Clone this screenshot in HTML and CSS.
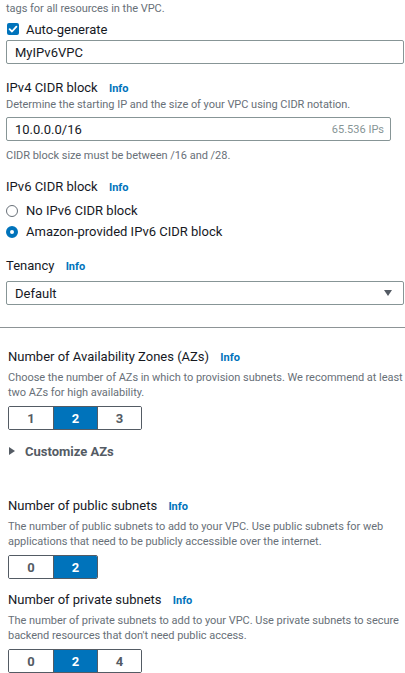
FILE: index.html
```html
<!DOCTYPE html>
<html lang="en">
<head>
    <meta charset="UTF-8">
    <meta name="viewport" content="width=device-width, initial-scale=1.0">
    <title>Create VPC</title>
    <link rel="stylesheet" href="styles.css">
</head>

<body>
    <main>
        <section class="vpc-settings">
            <p class="hint name-hint">Enter a value for the Name tag. This value will be used to auto-generate Name tags for all resources in the VPC.</p>
            <label class="check-row">
                <span class="checkbox checked">
                    <svg viewBox="0 0 12 12" width="12" height="12"><path d="M2.6 6.2 L5 8.5 L9.4 3.6" fill="none" stroke="#fff" stroke-width="1.8" stroke-linecap="round" stroke-linejoin="round"/></svg>
                </span>
                Auto-generate
            </label>
            <div class="text-input wide">MyIPv6VPC</div>

            <div class="field-label">IPv4 CIDR block <a href="#" class="info">Info</a></div>
            <p class="hint">Determine the starting IP and the size of your VPC using CIDR notation.</p>
            <div class="text-input cidr">
                <span>10.0.0.0/16</span>
                <span class="ip-count">65.536 IPs</span>
            </div>
            <p class="hint constraint">CIDR block size must be between /16 and /28.</p>

            <div class="field-label">IPv6 CIDR block <a href="#" class="info">Info</a></div>
            <div class="radio-list">
                <label class="radio-row"><span class="radio"></span>No IPv6 CIDR block</label>
                <label class="radio-row"><span class="radio selected"></span>Amazon-provided IPv6 CIDR block</label>
            </div>

            <div class="field-label">Tenancy <a href="#" class="info">Info</a></div>
            <div class="text-input select wide">
                <span>Default</span>
                <svg class="caret-down" viewBox="0 0 10 8" width="10" height="8"><path d="M1 1 H9 L5 7 Z" fill="#545b64"/></svg>
            </div>
        </section>

        <hr class="divider">

        <section class="subnet-settings">
            <div class="field-label az-label">Number of Availability Zones (AZs) <a href="#" class="info">Info</a></div>
            <p class="hint">Choose the number of AZs in which to provision subnets. We recommend at least two AZs for high availability.</p>
            <div class="segmented">
                <button>1</button>
                <button class="active">2</button>
                <button>3</button>
            </div>
            <div class="expander">
                <svg viewBox="0 0 8 10" width="8" height="10"><path d="M1 1 L7 5 L1 9 Z" fill="#545b64"/></svg>
                Customize AZs
            </div>

            <div class="field-label public-label">Number of public subnets <a href="#" class="info">Info</a></div>
            <p class="hint">The number of public subnets to add to your VPC. Use public subnets for web applications that need to be publicly accessible over the internet.</p>
            <div class="segmented">
                <button>0</button>
                <button class="active">2</button>
            </div>

            <div class="field-label private-label">Number of private subnets <a href="#" class="info">Info</a></div>
            <p class="hint">The number of private subnets to add to your VPC. Use private subnets to secure backend resources that don't need public access.</p>
            <div class="segmented">
                <button>0</button>
                <button class="active">2</button>
                <button>4</button>
            </div>
        </section>
    </main>
</body>

</html>
```

FILE: styles.css
```css
body {
    font-family: Roboto, "Liberation Sans", Arial, sans-serif;
    margin: 0;
    background-color: #fff;
    color: #16191f;
    overflow: hidden;
}

main {
    width: 405px;
}

p {
    margin: 0;
}

.vpc-settings {
    padding-left: 6px;
}

.subnet-settings {
    padding-left: 8px;
}

.hint {
    font-size: 11px;
    line-height: 15px;
    color: #687078;
    letter-spacing: -0.03px;
}

.name-hint {
    margin-top: -14px;
}

.check-row {
    display: flex;
    align-items: center;
    gap: 7px;
    height: 18px;
    margin-top: 4px;
    margin-left: 1px;
    font-size: 13px;
}

.checkbox {
    width: 12px;
    height: 12px;
    border-radius: 2px;
    background-color: #0073bb;
    display: flex;
}

.text-input {
    box-sizing: border-box;
    height: 24px;
    border: 1px solid #879596;
    border-radius: 2px;
    padding: 0 8px;
    font-size: 13px;
    display: flex;
    align-items: center;
    justify-content: space-between;
}

.wide {
    width: 398px;
    margin-top: 2px;
}

.cidr {
    width: 385px;
    margin-top: 5px;
}

.ip-count {
    font-size: 11px;
    color: #879596;
    margin-right: -2px;
}

.constraint {
    margin-top: 7px;
}

.field-label {
    font-size: 13px;
    line-height: 18px;
    height: 18px;
    margin-top: 15px;
}

.info {
    font-size: 11px;
    line-height: 1;
    font-weight: bold;
    color: #0073bb;
    text-decoration: none;
    margin-left: 8px;
}

.radio-list {
    margin-top: 4px;
}

.radio-row {
    display: flex;
    align-items: center;
    gap: 8px;
    height: 21px;
    font-size: 13px;
}

.radio {
    box-sizing: border-box;
    width: 12px;
    height: 12px;
    border-radius: 50%;
    border: 1px solid #687078;
}

.radio.selected {
    border: 4px solid #0073bb;
    background-color: #fff;
}

.select {
    margin-top: 6px;
    width: 398px;
}

.caret-down {
    margin-right: 2px;
}

.divider {
    border: none;
    border-top: 1px solid #8d9496;
    margin: 22px 0 0;
}

.az-label {
    margin-top: 20px;
}

.subnet-settings .hint {
    margin-top: 4px;
}

.segmented {
    display: flex;
    width: fit-content;
    margin-top: 6px;
    border: 1px solid #545b64;
    border-radius: 2px;
    overflow: hidden;
}

.segmented button {
    width: 44px;
    height: 22px;
    border: none;
    border-left: 1px solid #545b64;
    background-color: #fff;
    color: #545b64;
    font-family: inherit;
    font-size: 13px;
    font-weight: bold;
    padding: 0;
}

.segmented button:first-child {
    border-left: none;
}

.segmented button.active {
    background-color: #0073bb;
    color: #fff;
}

.expander {
    display: flex;
    align-items: center;
    gap: 9px;
    height: 18px;
    margin-top: 12px;
    font-size: 13px;
    font-weight: bold;
    color: #545b64;
}

.public-label {
    margin-top: 37px;
}

.private-label {
    margin-top: 12px;
}
```
